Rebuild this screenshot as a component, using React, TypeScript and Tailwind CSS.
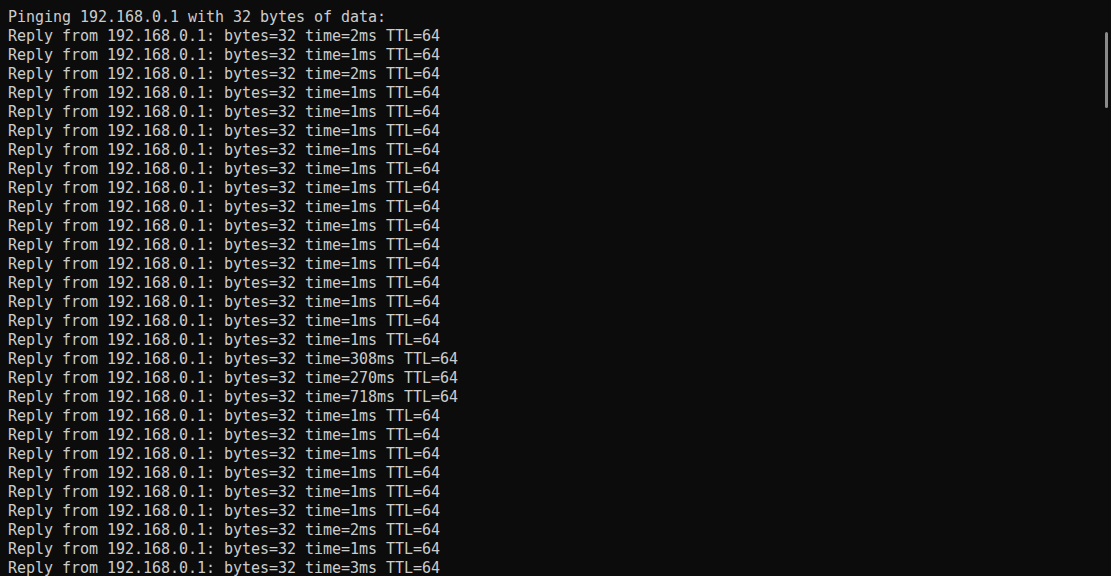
const times = [2, 1, 2, 1, 1, 1, 1, 1, 1, 1, 1, 1, 1, 1, 1, 1, 1, 308, 270, 718, 1, 1, 1, 1, 1, 1, 2, 1, 3];

export default function App() {
  return (
    <div className="relative h-[576px] w-[1111px] overflow-hidden bg-[#0c0c0c]">
      <div
        className="pl-2 pt-[8px] text-[15px] leading-[19px] tracking-[-0.03px] text-[#cccccc] whitespace-pre"
        style={{ fontFamily: '"DejaVu Sans Mono", "Liberation Mono", monospace' }}
      >
        <div>Pinging 192.168.0.1 with 32 bytes of data:</div>
        {times.map((t, i) => (
          <div key={i}>{`Reply from 192.168.0.1: bytes=32 time=${t}ms TTL=64`}</div>
        ))}
      </div>
      {/* scrollbar thumb */}
      <div className="absolute left-[1105px] top-[32px] h-[76px] w-[3px] rounded-full bg-[#8b8b8b]" />
    </div>
  );
}
